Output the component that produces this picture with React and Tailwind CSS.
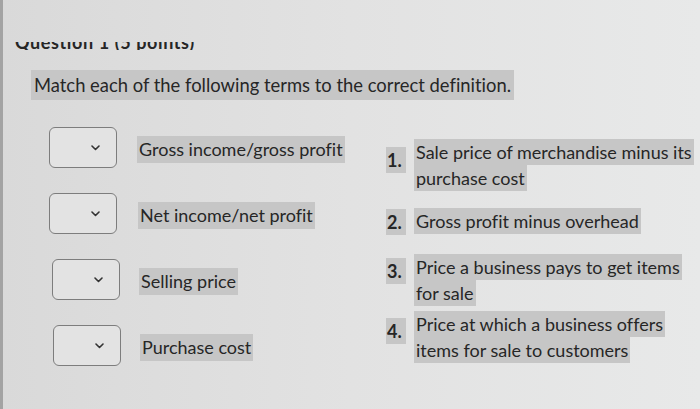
import React from "react";

const terms = [
  { label: "Gross income/gross profit", box: "ml-[49px]", gap: "ml-[20px]" },
  { label: "Net income/net profit", box: "ml-[49px]", gap: "ml-[21px]" },
  { label: "Selling price", box: "ml-[52px]", gap: "ml-[19px]" },
  { label: "Purchase cost", box: "ml-[53px]", gap: "ml-[19px]" },
];

const defs = [
  { n: "1.", lines: ["Sale price of merchandise minus its", "purchase cost"], wrap: "mt-[139px]", num: "mt-[8px]" },
  { n: "2.", lines: ["Gross profit minus overhead"], wrap: "mt-[17px]", num: "mt-[1px]" },
  { n: "3.", lines: ["Price a business pays to get items", "for sale"], wrap: "mt-[19px]", num: "mt-[4px]" },
  { n: "4.", lines: ["Price at which a business offers", "items for sale to customers"], wrap: "mt-[5px]", num: "mt-[7px]" },
];

function Select({ className }) {
  return (
    <div
      className={`flex h-[41px] w-[68px] shrink-0 items-center justify-end rounded-[6px] border-[1.5px] border-[#7d7d7d] bg-[#e3e3e3] pr-[16px] ${className}`}
    >
      <svg width="9" height="6" viewBox="0 0 9 6" fill="none">
        <path d="M1 1l3.5 3.5L8 1" stroke="#333" strokeWidth="1.6" strokeLinecap="round" strokeLinejoin="round" />
      </svg>
    </div>
  );
}

export default function App() {
  return (
    <div
      className="relative h-[409px] w-[700px] overflow-hidden bg-gradient-to-r from-[#d9d9d9] via-[#e2e2e2] to-[#e8e9e9] text-[#262626] [font-variant-ligatures:none]"
      style={{ fontFamily: "Lato, 'Open Sans', sans-serif" }}
    >
      {/* screen bezel edge */}
      <div className="absolute left-0 top-0 h-full w-[3px] bg-[#a3a3a3]" />

      {/* clipped question header */}
      <div className="ml-[15px] mt-[42px] h-[8px] overflow-hidden">
        <div className="-mt-[10px] text-[18px] font-bold leading-[20px] tracking-[0.6px]">
          Question 1 (5 points)
        </div>
      </div>

      {/* prompt */}
      <div className="ml-[31px] mt-[20px] w-fit bg-[#c6c6c6] px-[3px] text-[18.4px] leading-[30px]">
        Match each of the following terms to the correct definition.
      </div>

      <div className="flex">
        {/* terms */}
        <div className="flex w-[386px] shrink-0 flex-col gap-[25px] pt-[27px]">
          {terms.map((t) => (
            <div key={t.label} className="flex h-[41px] items-center">
              <Select className={t.box} />
              <span className={`${t.gap} mt-[3px] bg-[#c6c6c6] px-[2px] text-[18px] leading-[27px]`}>
                {t.label}
              </span>
            </div>
          ))}
        </div>

        {/* definitions */}
        <div className="-mt-[100px] flex flex-col">
          {defs.map((d) => (
            <div key={d.n} className={`flex ${d.wrap}`}>
              <div className={`w-[20px] ${d.num} h-[26px] shrink-0 self-start bg-[#c6c6c6] pl-[1px] text-[18px] font-bold leading-[26px]`}>
                {d.n}
              </div>
              <div className="ml-[8px] flex flex-col">
                {d.lines.map((l) => (
                  <span key={l} className="w-fit bg-[#c6c6c6] px-[2px] text-[18px] leading-[26px]">
                    {l}
                  </span>
                ))}
              </div>
            </div>
          ))}
        </div>
      </div>
    </div>
  );
}
